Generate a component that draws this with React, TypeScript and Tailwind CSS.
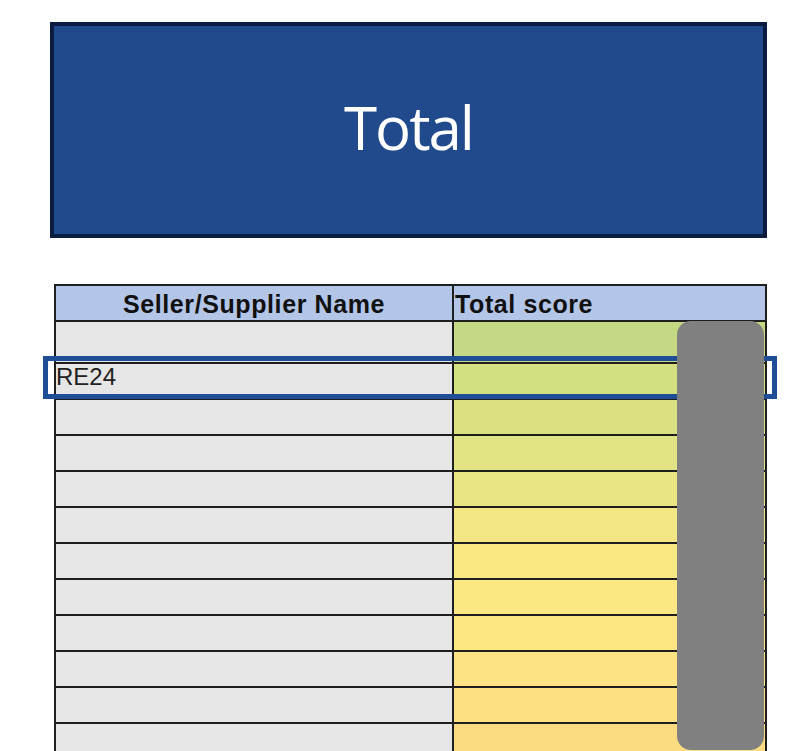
import React from "react";

// conditional-format colour scale for the score column, top to bottom
const scoreColors = [
  "#c5d985",
  "#d4df80",
  "#dbe181",
  "#e2e382",
  "#e9e583",
  "#f2e784",
  "#f8e884",
  "#fbe784",
  "#fce684",
  "#fde383",
  "#fde082",
  "#fddc81",
];

const names = ["", "RE24", "", "", "", "", "", "", "", "", "", ""];

export default function App() {
  return (
    <div className="relative w-[800px] h-[751px] overflow-hidden bg-white pt-[22px] pl-[50px]">
      <div className="w-[717px] h-[216px] border-4 border-[#0c1c40] bg-[#204a8c] flex items-center justify-center">
        <span
          className="text-white text-[60px] tracking-[-2px] leading-none pb-[6px]"
          style={{ fontFamily: '"Open Sans", sans-serif' }}
        >
          Total
        </span>
      </div>

      <div
        className="mt-[46px] ml-[4px] w-[713px] border-t-2 border-l-2 border-r-2 border-[#1e1e1e] text-[#111]"
        style={{ fontFamily: '"Liberation Sans", Arial, sans-serif' }}
      >
        <div className="grid grid-cols-[398px_1fr] h-[36px] border-b-2 border-[#1e1e1e] bg-[#b4c6e7] font-bold text-[25px] tracking-[0.6px]">
          <div className="border-r-2 border-[#1e1e1e] flex items-center justify-center">
            Seller/Supplier Name
          </div>
          <div className="flex items-center pl-[1px]">Total score</div>
        </div>
        {names.map((name, i) => (
          <div
            key={i}
            className={`grid grid-cols-[398px_1fr] border-b-2 border-[#1e1e1e] ${i === 0 ? "h-[42px]" : "h-[36px]"}`}
          >
            <div className="border-r-2 border-[#1e1e1e] bg-[#e7e6e6] text-[24px] leading-[24px] pt-[1px] text-[#222]">
              {name}
            </div>
            <div style={{ backgroundColor: scoreColors[i] }} />
          </div>
        ))}
      </div>

      {/* selected row highlight */}
      <div className="absolute left-[43px] top-[356px] w-[734px] h-[43px] border-[5px] border-[#1f4e96]" />

      {/* redaction block over score column */}
      <div className="absolute left-[677px] top-[321px] w-[87px] h-[429px] rounded-[14px] bg-[#808080]" />
    </div>
  );
}
